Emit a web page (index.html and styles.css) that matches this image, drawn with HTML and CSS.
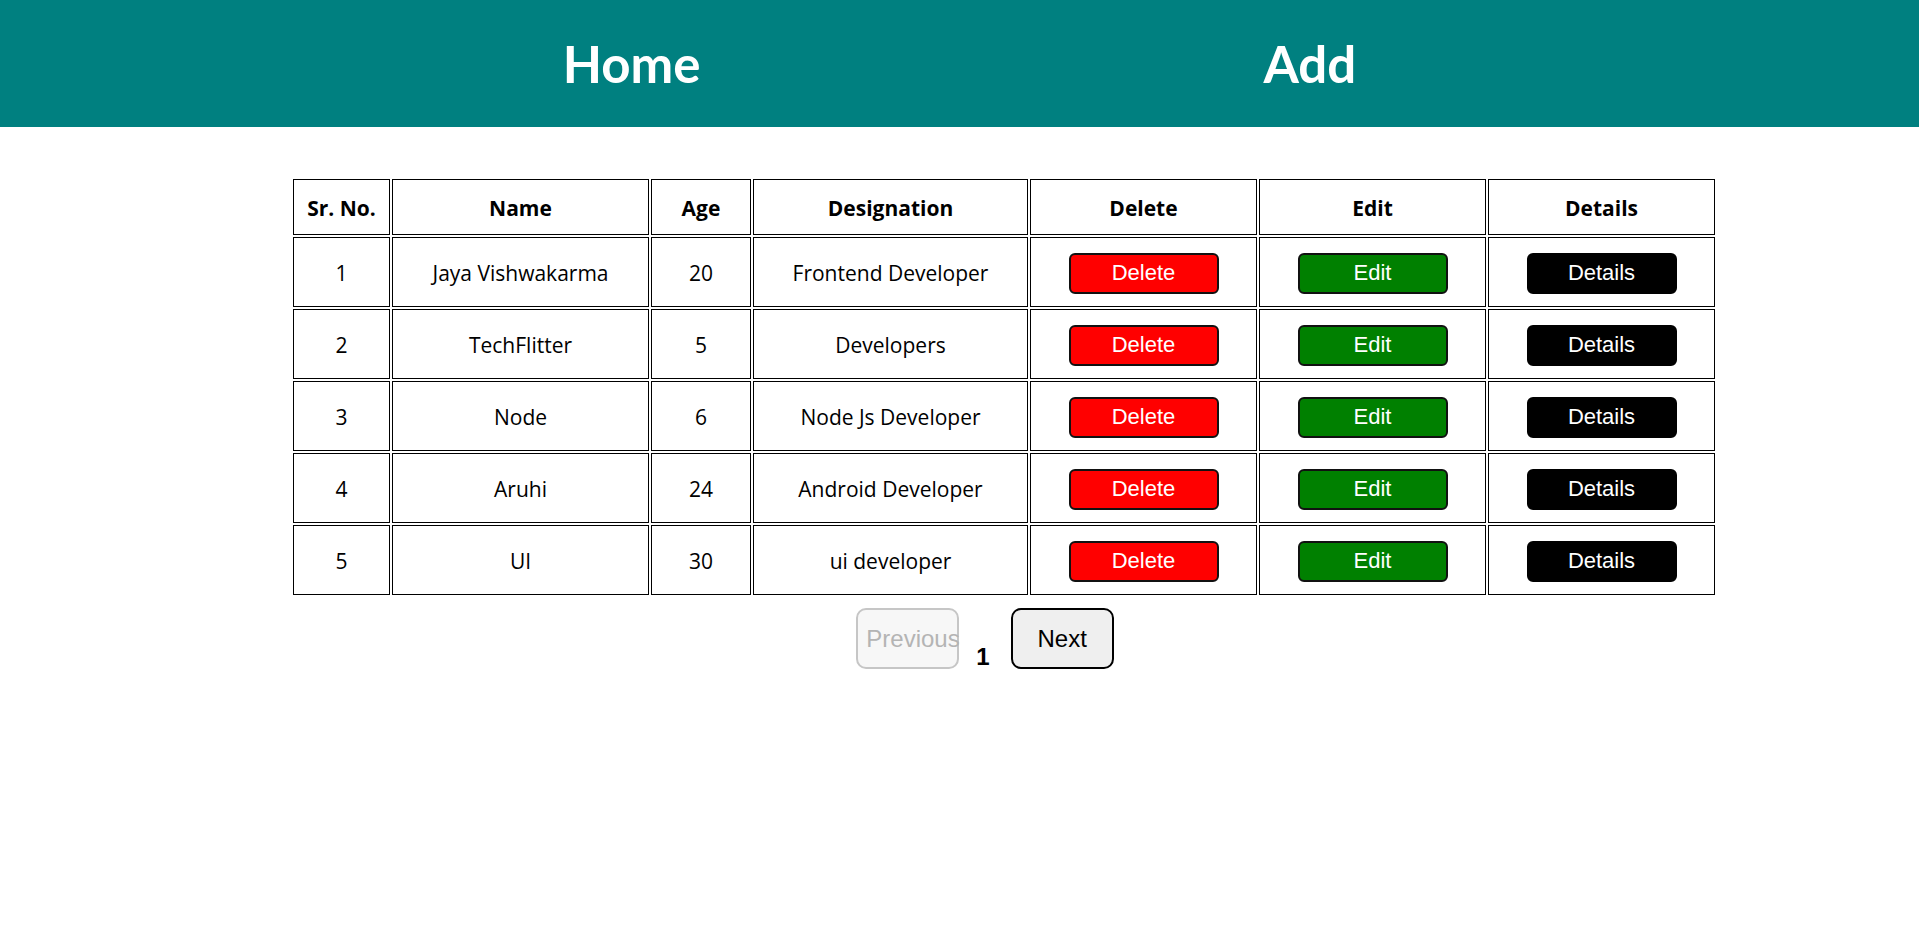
FILE: index.html
```html
<!DOCTYPE html>
<html lang="en">
<head>
    <meta charset="UTF-8">
    <meta name="viewport" content="width=device-width, initial-scale=1.0">
    <title>Users</title>
    <link rel="stylesheet" href="styles.css">
</head>
<body>
    <!-- Top navigation -->
    <header class="navbar">
        <a href="#" class="nav-link">Home</a>
        <a href="#" class="nav-link">Add</a>
    </header>

    <div class="content">
        <table class="users">
            <thead>
                <tr>
                    <th class="col-no">Sr. No.</th>
                    <th class="col-name">Name</th>
                    <th class="col-age">Age</th>
                    <th class="col-role">Designation</th>
                    <th class="col-action">Delete</th>
                    <th class="col-action">Edit</th>
                    <th class="col-action">Details</th>
                </tr>
            </thead>
            <tbody>
                <tr>
                    <td>1</td>
                    <td>Jaya Vishwakarma</td>
                    <td>20</td>
                    <td>Frontend Developer</td>
                    <td><button class="btn btn-delete">Delete</button></td>
                    <td><button class="btn btn-edit">Edit</button></td>
                    <td><button class="btn btn-details">Details</button></td>
                </tr>
                <tr>
                    <td>2</td>
                    <td>TechFlitter</td>
                    <td>5</td>
                    <td>Developers</td>
                    <td><button class="btn btn-delete">Delete</button></td>
                    <td><button class="btn btn-edit">Edit</button></td>
                    <td><button class="btn btn-details">Details</button></td>
                </tr>
                <tr>
                    <td>3</td>
                    <td>Node</td>
                    <td>6</td>
                    <td>Node Js Developer</td>
                    <td><button class="btn btn-delete">Delete</button></td>
                    <td><button class="btn btn-edit">Edit</button></td>
                    <td><button class="btn btn-details">Details</button></td>
                </tr>
                <tr>
                    <td>4</td>
                    <td>Aruhi</td>
                    <td>24</td>
                    <td>Android Developer</td>
                    <td><button class="btn btn-delete">Delete</button></td>
                    <td><button class="btn btn-edit">Edit</button></td>
                    <td><button class="btn btn-details">Details</button></td>
                </tr>
                <tr>
                    <td>5</td>
                    <td>UI</td>
                    <td>30</td>
                    <td>ui developer</td>
                    <td><button class="btn btn-delete">Delete</button></td>
                    <td><button class="btn btn-edit">Edit</button></td>
                    <td><button class="btn btn-details">Details</button></td>
                </tr>
            </tbody>
        </table>

        <!-- Pagination -->
        <div class="pagination">
            <button class="page-btn page-prev" disabled>Previous</button>
            <span class="page-num">1</span>
            <button class="page-btn page-next">Next</button>
        </div>
    </div>
</body>
</html>
```

FILE: styles.css
```css
body {
    margin: 0;
    font-family: "Open Sans", "Noto Sans", sans-serif;
    color: black;
    background: white;
}

/* Top navigation */
.navbar {
    height: 127px;
    background-color: #008080;
    display: flex;
    justify-content: space-evenly;
    align-items: center;
}

.nav-link {
    font-family: Lato, "Open Sans", sans-serif;
    font-size: 51px;
    font-weight: bold;
    color: white;
    text-decoration: none;
}

.content {
    padding: 50px 0 0 89px;
}

/* Users table */
.users {
    margin: 0 auto;
    width: 1426px;
    border-spacing: 2px;
    table-layout: fixed;
}

.users th,
.users td {
    box-sizing: border-box;
    border: 1px solid black;
    padding: 2px 0 0;
    text-align: center;
    vertical-align: middle;
    font-size: 21px;
}

.users th {
    height: 56px;
    font-weight: bold;
}

.users td {
    height: 70px;
}

.col-no { width: 97px; }
.col-name { width: 257px; }
.col-age { width: 100px; }
.col-role { width: 275px; }
.col-action { width: 227px; }

.btn {
    width: 150px;
    height: 41px;
    font-family: "Liberation Sans", Arial, sans-serif;
    font-size: 22px;
    color: white;
    border: 2px solid #111;
    border-radius: 6px;
    padding: 0;
    cursor: pointer;
}

.btn-delete { background-color: red; }
.btn-edit { background-color: green; }
.btn-details { background-color: black; border-color: black; }

/* Pagination */
.pagination {
    display: flex;
    justify-content: center;
    align-items: flex-end;
    margin-top: 11px;
    padding-right: 38px;
}

.page-btn {
    width: 103px;
    height: 61px;
    padding: 0 8px;
    font-family: "Liberation Sans", Arial, sans-serif;
    font-size: 24px;
    border-radius: 10px;
    border: 2px solid black;
    background-color: #efefef;
    color: black;
    cursor: pointer;
}

.page-prev {
    border-color: #c6c6c6;
    background-color: #f7f7f7;
    color: #b4b4b4;
    cursor: default;
    overflow: visible;
    white-space: nowrap;
}

.page-num {
    font-family: "Liberation Sans", Arial, sans-serif;
    font-size: 24px;
    font-weight: bold;
    line-height: 24px;
    margin: 0 21px 0 17px;
}
```
